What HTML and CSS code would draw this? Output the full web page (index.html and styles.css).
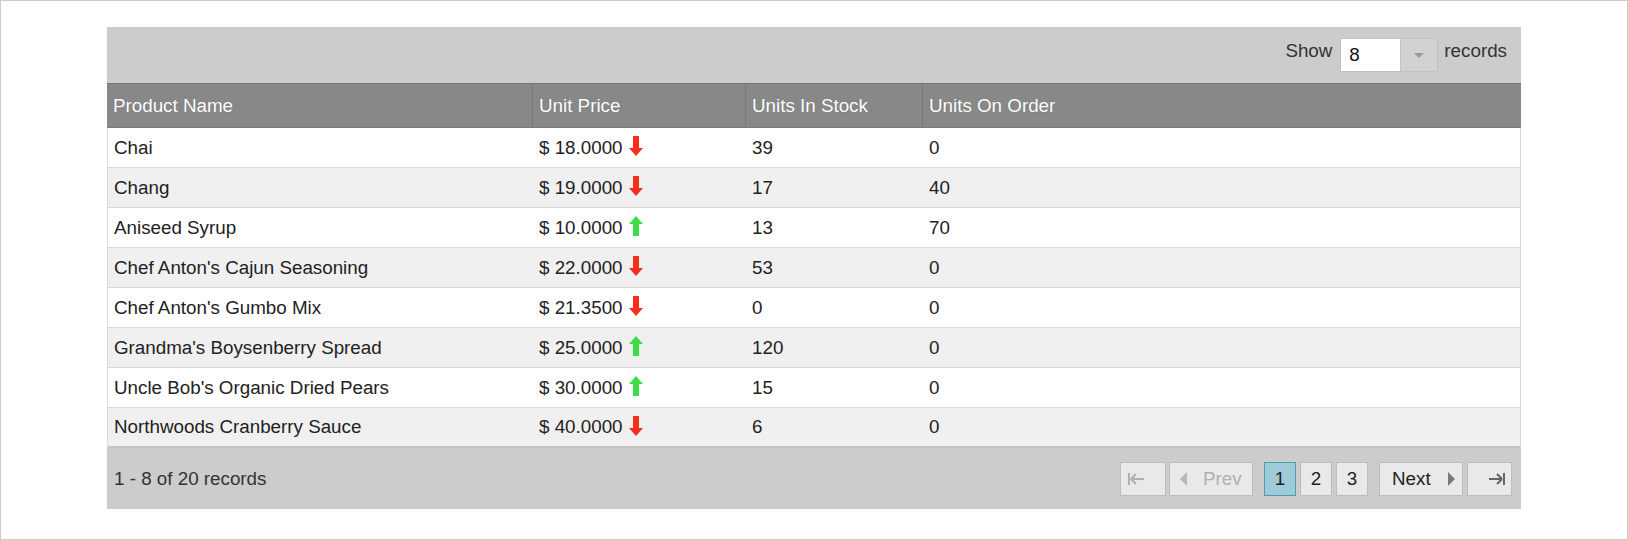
FILE: index.html
```html
<!DOCTYPE html>
<html>
<head>
<meta charset="utf-8">
<link rel="stylesheet" href="styles.css">
</head>
<body>
<div class="page">
  <div class="grid">
    <div class="toolbar">
      <span class="lbl">Show</span>
      <div class="select"><span class="val">8</span><span class="drop"><span class="tri"></span></span></div>
      <span class="lbl">records</span>
    </div>
    <div class="head row">
      <div class="th">Product Name</div>
      <div class="th">Unit Price</div>
      <div class="th">Units In Stock</div>
      <div class="th">Units On Order</div>
    </div>
    <div class="body">
      <div class="row tr"><div class="td">Chai</div><div class="td">$ 18.0000 <svg class="arr down" viewBox="0 0 14 20"><path d="M4 0h6v12h4l-7 8-7-8h4z"/></svg></div><div class="td">39</div><div class="td">0</div></div>
      <div class="row tr alt"><div class="td">Chang</div><div class="td">$ 19.0000 <svg class="arr down" viewBox="0 0 14 20"><path d="M4 0h6v12h4l-7 8-7-8h4z"/></svg></div><div class="td">17</div><div class="td">40</div></div>
      <div class="row tr"><div class="td">Aniseed Syrup</div><div class="td">$ 10.0000 <svg class="arr up" viewBox="0 0 14 20"><path d="M7 0l7 8h-4v12H4V8H0z"/></svg></div><div class="td">13</div><div class="td">70</div></div>
      <div class="row tr alt"><div class="td">Chef Anton's Cajun Seasoning</div><div class="td">$ 22.0000 <svg class="arr down" viewBox="0 0 14 20"><path d="M4 0h6v12h4l-7 8-7-8h4z"/></svg></div><div class="td">53</div><div class="td">0</div></div>
      <div class="row tr"><div class="td">Chef Anton's Gumbo Mix</div><div class="td">$ 21.3500 <svg class="arr down" viewBox="0 0 14 20"><path d="M4 0h6v12h4l-7 8-7-8h4z"/></svg></div><div class="td">0</div><div class="td">0</div></div>
      <div class="row tr alt"><div class="td">Grandma's Boysenberry Spread</div><div class="td">$ 25.0000 <svg class="arr up" viewBox="0 0 14 20"><path d="M7 0l7 8h-4v12H4V8H0z"/></svg></div><div class="td">120</div><div class="td">0</div></div>
      <div class="row tr"><div class="td">Uncle Bob's Organic Dried Pears</div><div class="td">$ 30.0000 <svg class="arr up" viewBox="0 0 14 20"><path d="M7 0l7 8h-4v12H4V8H0z"/></svg></div><div class="td">15</div><div class="td">0</div></div>
      <div class="row tr alt last"><div class="td">Northwoods Cranberry Sauce</div><div class="td">$ 40.0000 <svg class="arr down" viewBox="0 0 14 20"><path d="M4 0h6v12h4l-7 8-7-8h4z"/></svg></div><div class="td">6</div><div class="td">0</div></div>
    </div>
    <div class="footer">
      <span class="info">1 - 8 of 20 records</span>
      <div class="pager">
        <span class="btn first disabled"><svg class="ico" viewBox="0 0 18 14"><path d="M2 1v12M4 7h13M4 7l5-5M4 7l5 5" fill="none" stroke="currentColor" stroke-width="2"/></svg></span>
        <span class="btn prev disabled"><span class="tl"></span>Prev</span>
        <span class="btn num active">1</span>
        <span class="btn num">2</span>
        <span class="btn num">3</span>
        <span class="btn next">Next<span class="tr2"></span></span>
        <span class="btn lastb"><svg class="ico" viewBox="0 0 18 14"><path d="M16 1v12M1 7h13M14 7l-5-5M14 7l-5 5" fill="none" stroke="currentColor" stroke-width="2"/></svg></span>
      </div>
    </div>
  </div>
</div>
</body>
</html>
```
FILE: styles.css
```css
* { box-sizing: border-box; }
html, body { margin: 0; padding: 0; }
body {
  font-family: "Liberation Sans", Arial, Helvetica, sans-serif;
  font-size: 18.8px;
  color: #222;
  background: #fff;
}
.page {
  width: 1628px;
  height: 540px;
  border: 1px solid #cccccc;
  padding: 26px 106px 0 106px;
}
.grid { width: 1414px; }
.toolbar {
  height: 56px;
  background: #cccccc;
  display: flex;
  justify-content: flex-end;
  align-items: center;
  padding-right: 14px;
  color: #333;
}
.lbl { line-height: 1; margin-bottom: 8px; }
.select {
  display: flex;
  width: 98px;
  height: 34px;
  border: 1px solid #c2c2c2;
  margin: 0 6px 0 8px;
  background: #fff;
}
.val {
  width: 59px;
  padding-left: 8px;
  display: flex;
  align-items: center;
  color: #111;
}
.drop {
  flex: 1;
  background: #d2d2d2;
  border-left: 1px solid #c4c4c4;
  display: flex;
  align-items: center;
  justify-content: center;
}
.tri {
  width: 0; height: 0;
  border-left: 5px solid transparent;
  border-right: 5px solid transparent;
  border-top: 5px solid #999;
}
.row {
  display: grid;
  grid-template-columns: 425px 213px 177px 1fr;
}
.head {
  height: 45px;
  background: #888888;
  border-top: 1px solid #777;
  border-bottom: 1px solid #7a7a7a;
  color: #fff;
}
.th {
  display: flex;
  align-items: center;
  padding-left: 6px;
  text-shadow: 0 0 1px rgba(0,0,0,0.2);
}
.th + .th { border-left: 1px solid #787878; padding-left: 6px; }
.body {
  border-left: 1px solid #dadada;
  border-right: 1px solid #dadada;
}
.body .row { grid-template-columns: 424px 213px 177px 1fr; }
.tr {
  height: 40px;
  background: #fff;
  border-bottom: 1px solid #d8d8d8;
}
.tr.alt { background: #f0f0f0; }
.tr.last { border-bottom: 2px solid #c4c4c4; }
.td {
  display: flex;
  align-items: center;
  padding-left: 6px;
  white-space: nowrap;
}
.td + .td { padding-left: 7px; }
.arr {
  width: 14px;
  height: 20px;
  margin-left: 6px;
  margin-top: -3px;
}
.arr.down { fill: #f4301b; }
.arr.up { fill: #3fdc47; }
.footer {
  height: 61px;
  background: #cccccc;
  display: flex;
  align-items: center;
  justify-content: space-between;
  padding: 0 9px 0 7px;
  color: #333;
}
.pager { display: flex; align-items: center; }
.btn {
  height: 34px;
  background: #e9e9e9;
  border: 1px solid #bdbdbd;
  display: flex;
  align-items: center;
  color: #222;
}
.btn.disabled { color: #b0b0b0; }
.first { width: 46px; padding-left: 6px; margin-right: 3px; }
.prev { width: 84px; padding-left: 10px; margin-right: 11px; }
.num { width: 32px; justify-content: center; margin-right: 4px; }
.num.active { background: #9fcad8; border-color: #4e9bb2; }
.num:nth-child(5) { margin-right: 11px; }
.next { width: 84px; padding-left: 12px; margin-right: 4px; }
.lastb { width: 45px; justify-content: flex-end; padding-right: 5px; color: #666; }
.ico { width: 18px; height: 14px; }
.tl {
  width: 0; height: 0;
  border-top: 7px solid transparent;
  border-bottom: 7px solid transparent;
  border-right: 7px solid #b8b8b8;
  margin-right: 16px;
}
.tr2 {
  width: 0; height: 0;
  border-top: 7px solid transparent;
  border-bottom: 7px solid transparent;
  border-left: 7px solid #7a7a7a;
  margin-left: 17px;
}
```
